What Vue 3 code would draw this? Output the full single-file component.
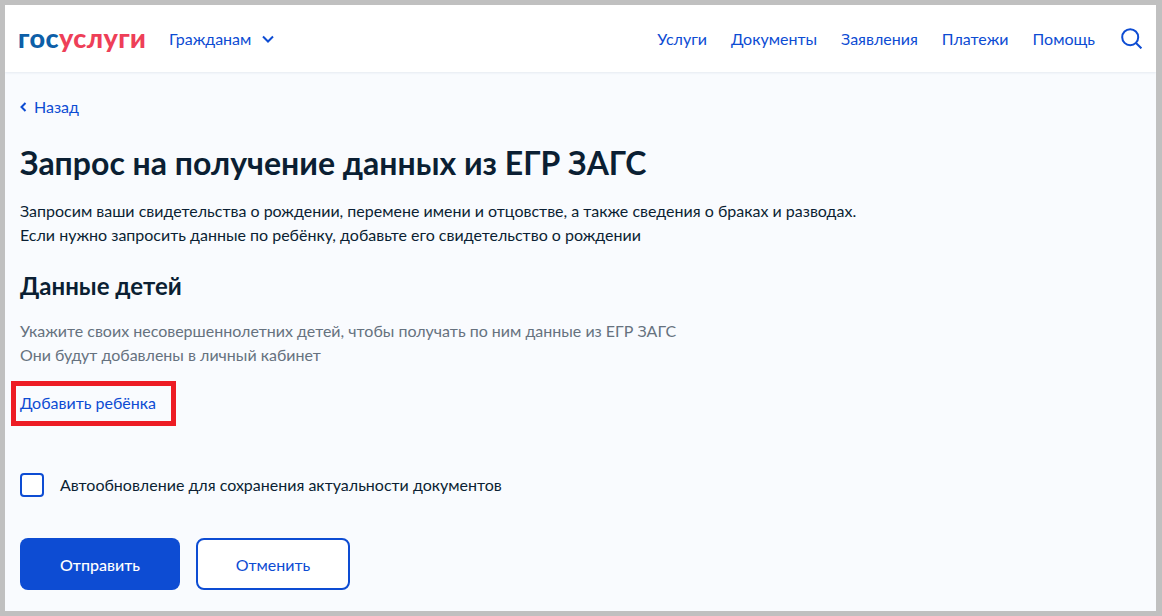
<script setup>
const nav = ['Услуги', 'Документы', 'Заявления', 'Платежи', 'Помощь']
</script>

<template>
  <div class="frame">
    <div class="page">
      <header class="header">
        <div class="logo"><span class="gos">гос</span><span class="usl">услуги</span></div>
        <a class="citizens">Гражданам
          <svg width="12" height="8" viewBox="0 0 12 8"><path d="M1 1.5l5 5 5-5" fill="none" stroke="#0d4cd3" stroke-width="2"/></svg>
        </a>
        <nav class="nav">
          <a v-for="n in nav" :key="n">{{ n }}</a>
        </nav>
        <svg class="search" width="21" height="21" viewBox="0 0 21 21"><circle cx="9.2" cy="9.2" r="8" fill="none" stroke="#0d4cd3" stroke-width="2"/><path d="M15 15l5.4 5.4" fill="none" stroke="#0d4cd3" stroke-width="2"/></svg>
      </header>
      <main class="main">
        <a class="back"><svg width="7" height="10" viewBox="0 0 7 10"><path d="M5.5 1L1.5 5l4 4" fill="none" stroke="#0d4cd3" stroke-width="2"/></svg>Назад</a>
        <h1>Запрос на получение данных из ЕГР ЗАГС</h1>
        <p class="lead">Запросим ваши свидетельства о рождении, перемене имени и отцовстве, а также сведения о браках и разводах.<br>Если нужно запросить данные по ребёнку, добавьте его свидетельство о рождении</p>
        <h2>Данные детей</h2>
        <p class="hint">Укажите своих несовершеннолетних детей, чтобы получать по ним данные из ЕГР ЗАГС<br>Они будут добавлены в личный кабинет</p>
        <div class="add"><a>Добавить ребёнка</a></div>
        <label class="check"><span class="box"></span>Автообновление для сохранения актуальности документов</label>
        <div class="buttons">
          <button class="primary">Отправить</button>
          <button class="secondary">Отменить</button>
        </div>
      </main>
    </div>
  </div>
</template>

<style>
html, body { margin: 0; background: #c0c0c0; }
</style>

<style scoped>
.frame {
  width: 1162px; height: 616px; box-sizing: border-box;
  padding: 5px 6px 5px 5px; background: #c0c0c0; overflow: hidden;
  font-family: Lato, "Noto Sans", sans-serif; color: #0b1f33;
}
.page { height: 100%; background: #f9fbfe; overflow: hidden; }
.header {
  height: 67px; background: #fff; display: flex; align-items: center;
  padding: 0 14px 0 13px; box-shadow: 0 1px 2px rgba(100,120,160,.12);
}
.logo { font-size: 27px; font-weight: 900; width: 151px; letter-spacing: .4px; line-height: 1; margin-top: -3px; }
.gos { color: #0d5fa8; }
.usl { color: #ee3f58; }
.citizens { color: #0d4cd3; font-size: 16px; display: flex; align-items: center; gap: 11px; }
.nav { margin-left: auto; display: flex; gap: 24px; font-size: 16px; color: #0d4cd3; }
.search { margin-left: 26px; }
.main { padding: 0 15px; }
.back { display: flex; align-items: center; gap: 7px; color: #0d4cd3; font-size: 16px; line-height: 24px; margin-top: 23px; }
h1 { font-size: 32px; line-height: 40px; font-weight: 700; margin: 24px 0 0; }
.lead { font-size: 16px; line-height: 24px; margin: 16px 0 0; }
h2 { font-size: 24px; line-height: 32px; font-weight: 700; margin: 23px 0 0; }
.hint { font-size: 16px; line-height: 24px; color: #66727f; margin: 17px 0 0; }
.add { display: inline-block; margin: 14px 0 0 -9px; padding: 7px 15px 9px 4px; border: 5px solid #ed1c24; font-size: 16px; line-height: 19px; color: #0d4cd3; }
.check { display: flex; align-items: center; gap: 16px; font-size: 16px; line-height: 24px; margin-top: 47px; }
.box { width: 24px; height: 24px; box-sizing: border-box; border: 2px solid #0d4cd3; border-radius: 4px; background: #fff; }
.buttons { display: flex; gap: 16px; margin-top: 41px; }
button { font-family: inherit; font-size: 16px; height: 52px; border-radius: 8px; box-sizing: border-box; }
.primary { width: 160px; background: #0d4cd3; color: #fff; border: 0; font-weight: 500; }
.secondary { width: 154px; background: #fff; color: #0d4cd3; border: 2px solid #0d4cd3; }
</style>
